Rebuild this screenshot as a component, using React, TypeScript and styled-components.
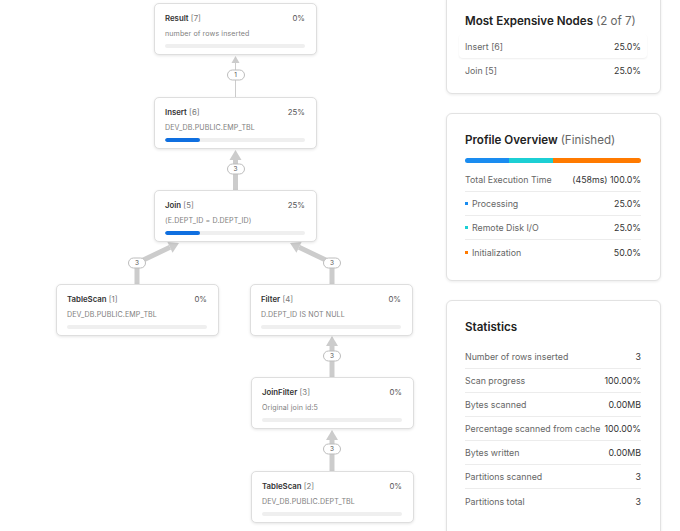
import styled, { createGlobalStyle } from "styled-components";

const Global = createGlobalStyle`
  html, body {
    margin: 0;
    padding: 0;
    background: #ffffff;
    font-family: Inter, "Noto Sans", sans-serif;
    overflow: hidden;
  }
`;

const Page = styled.div`
  display: flex;
  flex-direction: row;
  width: 680px;
  height: 531px;
  overflow: hidden;
`;

const Canvas = styled.div`
  position: relative;
  width: 446px;
  height: 531px;
  flex-shrink: 0;
`;

const EdgeLayer = styled.svg`
  position: absolute;
  left: 0;
  top: 0;
  width: 446px;
  height: 531px;
  pointer-events: none;
`;

const Node = styled.div`
  position: absolute;
  box-sizing: border-box;
  width: 163px;
  height: 52px;
  padding: 9px 11px 0 10px;
  background: #ffffff;
  border: 1px solid #dedede;
  border-radius: 5px;
  box-shadow: 0 1px 3px rgba(0, 0, 0, 0.1);
`;

const NodeHead = styled.div`
  display: flex;
  justify-content: space-between;
  align-items: center;
  font-size: 7.8px;
  line-height: 10px;
  color: #555;
`;

const NodeName = styled.span`
  font-weight: 600;
  color: #333;
`;

const NodeId = styled.span`
  color: #777;
`;

const NodeDesc = styled.div`
  margin-top: 6px;
  font-size: 7.1px;
  line-height: 9px;
  color: #808080;
  letter-spacing: 0.1px;
  white-space: nowrap;
`;

const Track = styled.div`
  margin-top: 6px;
  height: 4px;
  border-radius: 2px;
  background: #efefef;
  overflow: hidden;
`;

const Fill = styled.div`
  height: 100%;
  border-radius: 2px;
  background: #0f6fe0;
`;

const Pill = styled.div`
  position: absolute;
  box-sizing: border-box;
  width: 18px;
  height: 11px;
  transform: translate(-50%, -50%);
  border: 1px solid #bdbdbd;
  border-radius: 6px;
  background: #ffffff;
  font-size: 6.5px;
  line-height: 9px;
  text-align: center;
  color: #555;
`;

const Side = styled.div`
  display: flex;
  flex-direction: column;
  gap: 19px;
  width: 215px;
  margin-top: -6px;
  flex-shrink: 0;
`;

const Panel = styled.div<{ $bottom: number }>`
  box-sizing: border-box;
  padding: 17px 19px ${({ $bottom }) => $bottom}px 18px;
  border: 1px solid #e2e2e2;
  border-radius: 6px;
  background: #ffffff;
  box-shadow: 0 1px 3px rgba(0, 0, 0, 0.08);
`;

const Title = styled.div<{ $gap: number }>`
  font-size: 11.6px;
  line-height: 18px;
  font-weight: 600;
  color: #222;
  white-space: nowrap;
  margin-bottom: ${({ $gap }) => $gap}px;
`;

const Sub = styled.span`
  font-weight: 400;
  color: #666;
`;

const Row = styled.div<{ $hover?: boolean }>`
  box-sizing: border-box;
  display: flex;
  justify-content: space-between;
  align-items: center;
  height: 24px;
  font-size: 8.8px;
  color: #666;
  white-space: nowrap;
  margin: ${({ $hover }) => ($hover ? "0 -6px" : "0")};
  padding: ${({ $hover }) => ($hover ? "0 6px" : "0")};
  border-radius: ${({ $hover }) => ($hover ? "4px" : "0")};
  box-shadow: ${({ $hover }) => ($hover ? "0 1px 2px rgba(0, 0, 0, 0.07)" : "none")};

  &:not(:last-child) {
    border-bottom: ${({ $hover }) => ($hover ? "none" : "1px solid #ececec")};
  }
`;

const Value = styled.span`
  color: #333;
`;

const Label = styled.span`
  display: flex;
  align-items: center;
`;

const Dot = styled.span<{ $color: string }>`
  display: inline-block;
  width: 3px;
  height: 3px;
  margin-right: 4px;
  background: ${({ $color }) => $color};
`;

const Bar = styled.div`
  display: flex;
  height: 5px;
  border-radius: 3px;
  overflow: hidden;
  margin-bottom: 5px;
`;

const Segment = styled.div<{ $color: string }>`
  background: ${({ $color }) => $color};
`;

type NodeData = {
  name: string;
  id: number;
  pct: number;
  desc: string;
  x: number;
  y: number;
};

const nodes: NodeData[] = [
  { name: "Result", id: 7, pct: 0, desc: "number of rows inserted", x: 154, y: 3 },
  { name: "Insert", id: 6, pct: 25, desc: "DEV_DB.PUBLIC.EMP_TBL", x: 154, y: 97 },
  { name: "Join", id: 5, pct: 25, desc: "(E.DEPT_ID = D.DEPT_ID)", x: 154, y: 190 },
  { name: "TableScan", id: 1, pct: 0, desc: "DEV_DB.PUBLIC.EMP_TBL", x: 56, y: 284 },
  { name: "Filter", id: 4, pct: 0, desc: "D.DEPT_ID IS NOT NULL", x: 250, y: 284 },
  { name: "JoinFilter", id: 3, pct: 0, desc: "Original join id:5", x: 251, y: 377 },
  { name: "TableScan", id: 2, pct: 0, desc: "DEV_DB.PUBLIC.DEPT_TBL", x: 251, y: 471 },
];

const pills = [
  { x: 235.5, y: 75, n: 1 },
  { x: 235.5, y: 169, n: 3 },
  { x: 137, y: 263, n: 3 },
  { x: 332, y: 263, n: 3 },
  { x: 332, y: 356, n: 3 },
  { x: 332, y: 449, n: 3 },
];

const EDGE = "#cccccc";

function head(x1: number, y1: number, x2: number, y2: number, len: number, half: number) {
  const dx = x2 - x1;
  const dy = y2 - y1;
  const d = Math.hypot(dx, dy);
  const ux = dx / d;
  const uy = dy / d;
  const bx = x2 - ux * len;
  const by = y2 - uy * len;
  const px = -uy * half;
  const py = ux * half;
  return {
    base: [bx, by] as const,
    points: `${x2},${y2} ${bx + px},${by + py} ${bx - px},${by - py}`,
  };
}

function Edge({ pts, thick }: { pts: [number, number][]; thick: boolean }) {
  const [a, b] = [pts[pts.length - 2], pts[pts.length - 1]];
  const h = thick ? head(a[0], a[1], b[0], b[1], 10, 6) : head(a[0], a[1], b[0], b[1], 7, 4);
  const line = [...pts.slice(0, -1), [h.base[0], h.base[1]]].map((p) => p.join(",")).join(" ");
  return (
    <g>
      <polyline
        points={line}
        fill="none"
        stroke={EDGE}
        strokeWidth={thick ? 5 : 1}
        strokeLinejoin="round"
      />
      <polygon points={h.points} fill={EDGE} />
    </g>
  );
}

const edges: { pts: [number, number][]; thick: boolean }[] = [
  { pts: [[235.5, 97], [235.5, 56]], thick: false },
  { pts: [[235.5, 190], [235.5, 150]], thick: true },
  { pts: [[137, 284], [137, 263], [179, 243]], thick: true },
  { pts: [[332, 284], [332, 263], [290, 243]], thick: true },
  { pts: [[332, 377], [332, 336]], thick: true },
  { pts: [[332, 471], [332, 430]], thick: true },
];

const stats = [
  ["Number of rows inserted", "3"],
  ["Scan progress", "100.00%"],
  ["Bytes scanned", "0.00MB"],
  ["Percentage scanned from cache", "100.00%"],
  ["Bytes written", "0.00MB"],
  ["Partitions scanned", "3"],
  ["Partitions total", "3"],
];

const phases = [
  { label: "Processing", value: 25, color: "#1a8cf0" },
  { label: "Remote Disk I/O", value: 25, color: "#1ccfd4" },
  { label: "Initialization", value: 50, color: "#ff7a00" },
];

export default function App() {
  return (
    <Page>
      <Global />
      <Canvas>
        <EdgeLayer viewBox="0 0 446 531">
          {edges.map((e, i) => (
            <Edge key={i} pts={e.pts} thick={e.thick} />
          ))}
        </EdgeLayer>
        {pills.map((p, i) => (
          <Pill key={i} style={{ left: p.x, top: p.y }}>
            {p.n}
          </Pill>
        ))}
        {nodes.map((n) => (
          <Node key={n.id} style={{ left: n.x, top: n.y }}>
            <NodeHead>
              <span>
                <NodeName>{n.name}</NodeName> <NodeId>[{n.id}]</NodeId>
              </span>
              <span>{n.pct}%</span>
            </NodeHead>
            <NodeDesc>{n.desc}</NodeDesc>
            <Track>
              <Fill style={{ width: `${n.pct}%` }} />
            </Track>
          </Node>
        ))}
      </Canvas>
      <Side>
        <Panel $bottom={11}>
          <Title $gap={4}>
            Most Expensive Nodes <Sub>(2 of 7)</Sub>
          </Title>
          <Row $hover>
            <span>Insert [6]</span>
            <Value>25.0%</Value>
          </Row>
          <Row>
            <span>Join [5]</span>
            <Value>25.0%</Value>
          </Row>
        </Panel>
        <Panel $bottom={16}>
          <Title $gap={9}>
            Profile Overview <Sub>(Finished)</Sub>
          </Title>
          <Bar>
            {phases.map((p) => (
              <Segment key={p.label} $color={p.color} style={{ width: `${p.value}%` }} />
            ))}
          </Bar>
          <div>
            <Row>
              <span>Total Execution Time</span>
              <Value>(458ms) 100.0%</Value>
            </Row>
            {phases.map((p) => (
              <Row key={p.label}>
                <Label>
                  <Dot $color={p.color} />
                  {p.label}
                </Label>
                <Value>{p.value.toFixed(1)}%</Value>
              </Row>
            ))}
          </div>
        </Panel>
        <Panel $bottom={26}>
          <Title $gap={9}>Statistics</Title>
          <div>
            {stats.map(([k, v]) => (
              <Row key={k}>
                <span>{k}</span>
                <Value>{v}</Value>
              </Row>
            ))}
          </div>
        </Panel>
      </Side>
    </Page>
  );
}
